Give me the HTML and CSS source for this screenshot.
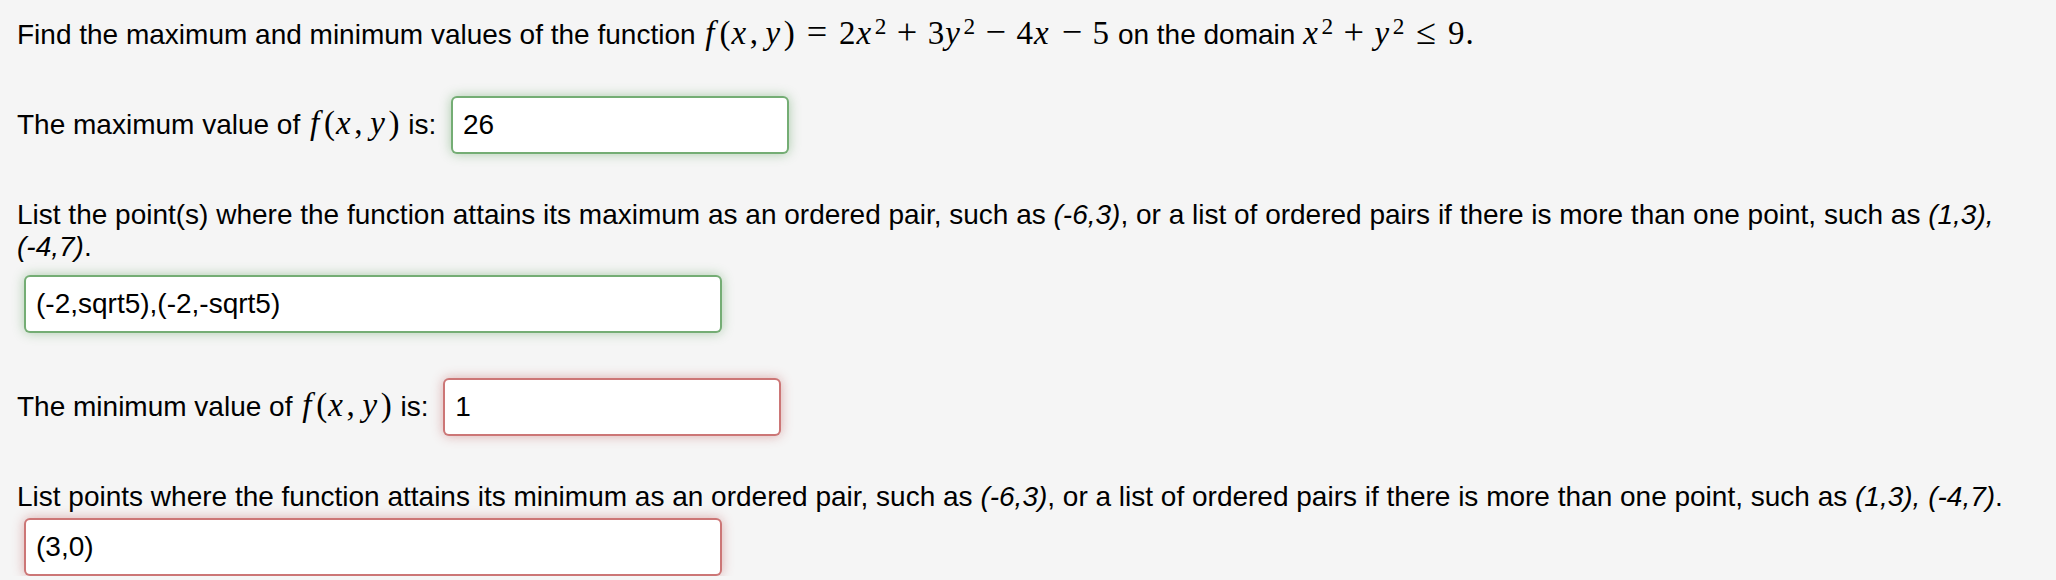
FILE: index.html
```html
<!DOCTYPE html>
<html lang="en">

<head>
    <meta charset="UTF-8">
    <title>Problem</title>
    <link rel="stylesheet" href="styles.css">
</head>

<body>
    <div class="problem">
        <p class="intro">Find the maximum and minimum values of the function
            <span class="m"><i class="f">f</i>(<i>x</i><span class="comma">,</span><i>y</i>)<span class="rel">=</span>2<i>x</i><sup>2</sup><span class="bin">+</span>3<i>y</i><sup>2</sup><span class="bin">−</span>4<i>x</i><span class="bin">−</span>5</span>
            on the domain
            <span class="m"><i>x</i><sup>2</sup><span class="bin">+</span><i>y</i><sup>2</sup><span class="rel">≤</span>9.</span>
        </p>

        <p class="row first">The maximum value of
            <span class="m"><i class="f">f</i>(<i>x</i><span class="comma">,</span><i>y</i>)</span> is:
            <input class="answer short correct" type="text" value="26">
        </p>

        <p class="row">List the point(s) where the function attains its maximum as an ordered pair, such as
            <em>(-6,3)</em>, or a list of ordered pairs if there is more than one point, such as <em>(1,3),
                (-4,7)</em>.</p>
        <div class="answer-line top-gap">
            <input class="answer long correct" type="text" value="(-2,sqrt5),(-2,-sqrt5)">
        </div>

        <p class="row">The minimum value of
            <span class="m"><i class="f">f</i>(<i>x</i><span class="comma">,</span><i>y</i>)</span> is:
            <input class="answer short incorrect" type="text" value="1">
        </p>

        <p class="row">List points where the function attains its minimum as an ordered pair, such as
            <em>(-6,3)</em>, or a list of ordered pairs if there is more than one point, such as <em>(1,3),
                (-4,7)</em>.</p>
        <div class="answer-line small-gap">
            <input class="answer long incorrect" type="text" value="(3,0)">
        </div>
    </div>
</body>

</html>
```

FILE: styles.css
```css
:root {
    --page: #f5f5f5;
    --text: #000000;
    --good: rgba(81, 153, 81, 0.8);
    --good-glow: rgba(81, 153, 81, 0.45);
    --bad: rgba(191, 84, 84, 0.8);
    --bad-glow: rgba(191, 84, 84, 0.45);
}

body {
    margin: 0;
    background: var(--page);
    color: var(--text);
}

.problem {
    padding: 17px 17px 0;
    font-family: "Liberation Sans", Arial, sans-serif;
    font-size: 28px;
    line-height: 32px;
}

p {
    margin: 0;
}

.row {
    margin-top: 45px;
}

/* math set to the width of the TeX fonts */
.m {
    font-family: "Liberation Serif", "DejaVu Serif", serif;
    font-size: 33px;
    letter-spacing: 0.03em;
    white-space: nowrap;
}

.m i {
    font-style: italic;
    padding-right: 0.08em;
}

.m i.f {
    padding: 0 0.12em 0 0.06em;
}

.m sup {
    font-size: 0.707em;
    line-height: 0;
    vertical-align: 0.45em;
}

.m .rel {
    font-size: 1.1em;
    line-height: 0;
    margin: 0 0.3em;
}

.m .bin {
    font-size: 1.1em;
    line-height: 0;
    margin: 0 0.26em;
}

.m .comma {
    margin-right: 0.2em;
}

em {
    font-style: italic;
}

.answer {
    box-sizing: border-box;
    height: 58px;
    margin: 0 0 0 7px;
    padding: 0 10px;
    border: 2px solid var(--good);
    border-radius: 6px;
    background: #ffffff;
    color: var(--text);
    font-family: "Liberation Sans", Arial, sans-serif;
    font-size: 28px;
    vertical-align: baseline;
    outline: 0;
}

.answer.short {
    width: 338px;
}

.answer.long {
    width: 698px;
}

.answer.correct {
    border-color: var(--good);
    box-shadow: 0 0 12px var(--good-glow);
}

.answer.incorrect {
    border-color: var(--bad);
    box-shadow: 0 0 12px var(--bad-glow);
}

.answer-line {
    line-height: 0;
}

.top-gap {
    margin-top: 12px;
}

.small-gap {
    margin-top: 5px;
}
```
